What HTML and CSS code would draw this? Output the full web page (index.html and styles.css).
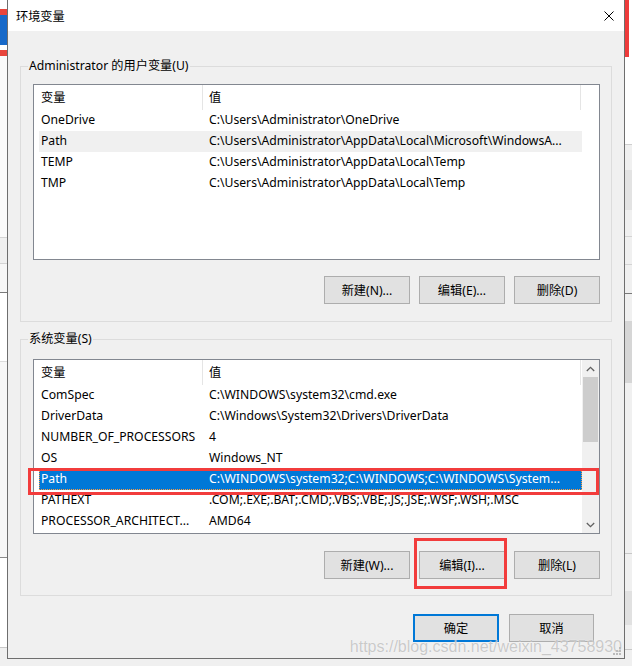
FILE: index.html
```html
<!doctype html>
<html>
<head>
    <meta charset="UTF-8">
    <title>环境变量</title>
    <link rel="stylesheet" href="styles.css">
</head>
<body>
<div class="desk">
    <div class="edge edge_l"></div>
    <div class="win">
        <div class="titlebar">
            <span>环境变量</span>
            <svg class="close" width="10" height="10" viewBox="0 0 10 10">
                <path d="M0.5 0.5L9.5 9.5M9.5 0.5L0.5 9.5" stroke="#000" stroke-width="1"/>
            </svg>
        </div>
        <div class="content">
            <fieldset class="group g_user">
                <legend>Administrator 的用户变量(U)</legend>
                <div class="list l_user">
                    <div class="rows">
                        <div class="hd"><span>变量</span><span>值</span></div>
                        <div class="row"><span>OneDrive</span><span>C:\Users\Administrator\OneDrive</span></div>
                        <div class="row row_hover"><span>Path</span><span>C:\Users\Administrator\AppData\Local\Microsoft\WindowsA...</span></div>
                        <div class="row"><span>TEMP</span><span>C:\Users\Administrator\AppData\Local\Temp</span></div>
                        <div class="row"><span>TMP</span><span>C:\Users\Administrator\AppData\Local\Temp</span></div>
                    </div>
                </div>
                <div class="btns">
                    <button>新建(N)...</button>
                    <button>编辑(E)...</button>
                    <button>删除(D)</button>
                </div>
            </fieldset>
            <fieldset class="group g_sys">
                <legend>系统变量(S)</legend>
                <div class="list l_sys">
                    <div class="rows">
                        <div class="hd"><span>变量</span><span>值</span></div>
                        <div class="row"><span>ComSpec</span><span>C:\WINDOWS\system32\cmd.exe</span></div>
                        <div class="row"><span>DriverData</span><span>C:\Windows\System32\Drivers\DriverData</span></div>
                        <div class="row"><span>NUMBER_OF_PROCESSORS</span><span>4</span></div>
                        <div class="row"><span>OS</span><span>Windows_NT</span></div>
                        <div class="row row_sel"><span>Path</span><span>C:\WINDOWS\system32;C:\WINDOWS;C:\WINDOWS\System...</span></div>
                        <div class="row"><span>PATHEXT</span><span>.COM;.EXE;.BAT;.CMD;.VBS;.VBE;.JS;.JSE;.WSF;.WSH;.MSC</span></div>
                        <div class="row"><span>PROCESSOR_ARCHITECT...</span><span>AMD64</span></div>
                    </div>
                    <div class="vbar">
                        <div class="arr">
                            <svg width="9" height="6" viewBox="0 0 9 6"><path d="M0.8 5L4.5 1.3L8.2 5" fill="none" stroke="#606060" stroke-width="1.3"/></svg>
                        </div>
                        <div class="thumb"></div>
                        <div class="track"></div>
                        <div class="arr">
                            <svg width="9" height="6" viewBox="0 0 9 6"><path d="M0.8 1L4.5 4.7L8.2 1" fill="none" stroke="#606060" stroke-width="1.3"/></svg>
                        </div>
                    </div>
                </div>
                <div class="btns">
                    <button>新建(W)...</button>
                    <button>编辑(I)...</button>
                    <button>删除(L)</button>
                </div>
            </fieldset>
            <div class="foot">
                <button class="btn_ok">确定</button>
                <button class="btn_cancel">取消</button>
            </div>
        </div>
        <!-- 截图上的红框标注 -->
        <div class="mark_box box_path"></div>
        <div class="mark_box box_edit"></div>
        <div class="watermark">https://blog.csdn.net/weixin_43758930</div>
        <svg class="grip" width="9" height="9" viewBox="0 0 9 9">
            <rect x="7" y="1" width="2" height="2" fill="#bbb"/>
            <rect x="4" y="4" width="2" height="2" fill="#bbb"/>
            <rect x="7" y="4" width="2" height="2" fill="#bbb"/>
            <rect x="1" y="7" width="2" height="2" fill="#bbb"/>
            <rect x="4" y="7" width="2" height="2" fill="#bbb"/>
            <rect x="7" y="7" width="2" height="2" fill="#bbb"/>
        </svg>
    </div>
    <div class="edge edge_r"></div>
</div>
</body>
</html>
```

FILE: styles.css
```css
body{margin:0;background:#f0f0f0;font-family:"Noto Sans","Noto Sans CJK SC",sans-serif;font-size:12.2px;color:#000;overflow:hidden}
.desk{display:flex;width:632px;height:666px}
/*窗口后面露出来的桌面边缘*/
.edge{width:7px;flex:none}
.edge_l{background:linear-gradient(to bottom,#fff 0 9px,#e8453c 9px 15px,#1769c9 15px 45px,#fff 45px 50px,#e8453c 50px 56px,#fafafa 56px 237px,#d4d4d4 237px 238px,#f0f0f0 238px 263px,#d4d4d4 263px 264px,#f7f7f7 264px 292px,#7a7a7a 292px 293px,#fff 293px 361px,#dcdcdc 361px 362px,#f7f7f7 362px 557px,#8a8a8a 557px 558px,#fff 558px 647px,#c8c8c8 647px 648px,#f0f0f0 648px)}
.edge_r{background:linear-gradient(#ee3b3b,#ee3b3b) 0 0/4px 57px no-repeat,linear-gradient(to bottom,#fff 0 144px,#cfcfcf 144px 145px,#f0f0f0 145px 170px,#e3e3e3 170px 210px,#f0f0f0 210px 236px,#d4d4d4 236px 237px,#f0f0f0 237px 264px,#d4d4d4 264px 265px,#f0f0f0 265px 293px,#7a7a7a 293px 294px,#f0f0f0 294px 321px,#d6d6d6 321px 383px,#f0f0f0 383px 553px,#c8c8c8 553px 554px,#f0f0f0 554px 591px,#e1e1e1 591px 625px,#f0f0f0 625px 649px,#c8c8c8 649px 650px,#f0f0f0 650px)}
/*对话框*/
.win{position:relative;width:618px;height:659px;flex:none;box-sizing:border-box;border:1px solid #6e6e6e;border-top:0;background:#f0f0f0}
.titlebar{height:31px;background:#fff;display:flex;align-items:center;padding-left:8px}
.close{margin-left:auto;margin-right:10px}
.content{padding:27px 12px 0 12px}
.group{margin:0;border:1px solid #dcdcdc;min-width:0}
.group legend{padding:0 1px;margin-left:-5px;line-height:16px}
.g_user{padding:10px 11px 17px 12px}
.g_sys{margin-top:9px;padding:12px 11px 16px 12px}
/*列表*/
.list{display:flex;box-sizing:border-box;border:1px solid #828790;background:#fff}
.l_user{height:176px}
.l_sys{height:175px}
.rows{width:548px;flex:none}
.hd,.row{display:grid;grid-template-columns:164px 378px;margin-left:5px}
.hd{height:25px;line-height:25px}
.hd span{border-right:1px solid #e5e5e5}
.row{height:21px;line-height:20px}
.hd span,.row span{white-space:nowrap;overflow:hidden}
.hd span:first-child,.row span:first-child{padding-left:2px}
.hd span+span,.row span+span{padding-left:6px}
.row_hover{background:#f0f0f0}
.row_sel{background:#0078d7;color:#fff;outline:1px dotted #ff9a3c;outline-offset:-1px}
.vbar{width:17px;display:flex;flex-direction:column;background:#f0f0f0}
.arr{height:17px;display:flex;align-items:center;justify-content:center}
.thumb{height:65px;margin:0 1px;background:#cdcdcd}
.track{flex:1}
/*按钮*/
button{font:inherit;color:#000;padding:0;width:86px;height:28px;border:1px solid #adadad;background:#e1e1e1}
.btns{display:flex;justify-content:flex-end;gap:9px}
.g_user .btns{margin-top:16px}
.g_sys .btns{margin-top:17px}
.foot{display:flex;justify-content:flex-end;gap:10px;margin-top:18px;padding-right:18px}
.btn_ok{border:2px solid #0078d7}
.btn_cancel{width:85px}
/*红框和水印*/
.mark_box{position:absolute;border:3px solid #f23c3c}
.box_path{left:20px;top:468px;width:565px;height:21px}
.box_edit{left:406px;top:538px;width:87px;height:45px}
.watermark{position:absolute;right:2px;top:642px;font-family:"Liberation Sans",Arial,sans-serif;font-size:16px;line-height:10px;color:rgba(150,150,150,.5);text-shadow:0 0 1px #fff}
.grip{position:absolute;right:3px;bottom:3px}
```
